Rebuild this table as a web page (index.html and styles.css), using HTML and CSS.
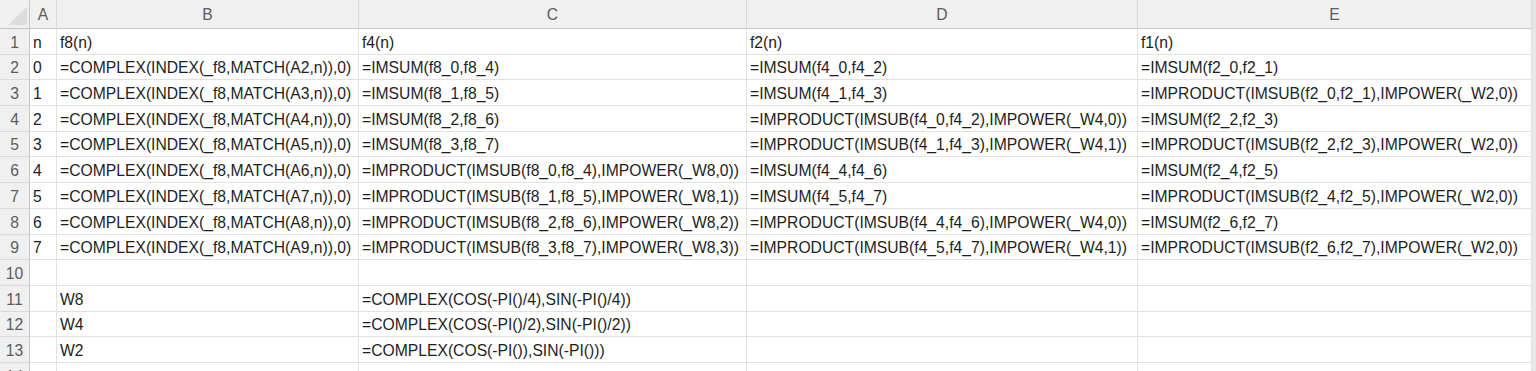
FILE: index.html
```html
<!DOCTYPE html>
<html lang="ja">
<head>
<meta charset="utf-8">
<title>Sheet</title>
<link rel="stylesheet" href="styles.css">
</head>
<body>
<div class="sheet">
  <div class="corner"><span class="tri"></span></div>
  <div class="colhdr">A</div>
  <div class="colhdr">B</div>
  <div class="colhdr">C</div>
  <div class="colhdr">D</div>
  <div class="colhdr">E</div>
  <div class="edge hdredge"></div>

  <div class="rowhdr">1</div>
  <div class="cell">n</div>
  <div class="cell">f8(n)</div>
  <div class="cell">f4(n)</div>
  <div class="cell">f2(n)</div>
  <div class="cell">f1(n)</div>
  <div class="edge"></div>

  <div class="rowhdr">2</div>
  <div class="cell">0</div>
  <div class="cell">=COMPLEX(INDEX(_f8,MATCH(A2,n)),0)</div>
  <div class="cell">=IMSUM(f8_0,f8_4)</div>
  <div class="cell">=IMSUM(f4_0,f4_2)</div>
  <div class="cell">=IMSUM(f2_0,f2_1)</div>
  <div class="edge"></div>

  <div class="rowhdr">3</div>
  <div class="cell">1</div>
  <div class="cell">=COMPLEX(INDEX(_f8,MATCH(A3,n)),0)</div>
  <div class="cell">=IMSUM(f8_1,f8_5)</div>
  <div class="cell">=IMSUM(f4_1,f4_3)</div>
  <div class="cell">=IMPRODUCT(IMSUB(f2_0,f2_1),IMPOWER(_W2,0))</div>
  <div class="edge"></div>

  <div class="rowhdr">4</div>
  <div class="cell">2</div>
  <div class="cell">=COMPLEX(INDEX(_f8,MATCH(A4,n)),0)</div>
  <div class="cell">=IMSUM(f8_2,f8_6)</div>
  <div class="cell">=IMPRODUCT(IMSUB(f4_0,f4_2),IMPOWER(_W4,0))</div>
  <div class="cell">=IMSUM(f2_2,f2_3)</div>
  <div class="edge"></div>

  <div class="rowhdr">5</div>
  <div class="cell">3</div>
  <div class="cell">=COMPLEX(INDEX(_f8,MATCH(A5,n)),0)</div>
  <div class="cell">=IMSUM(f8_3,f8_7)</div>
  <div class="cell">=IMPRODUCT(IMSUB(f4_1,f4_3),IMPOWER(_W4,1))</div>
  <div class="cell">=IMPRODUCT(IMSUB(f2_2,f2_3),IMPOWER(_W2,0))</div>
  <div class="edge"></div>

  <div class="rowhdr">6</div>
  <div class="cell">4</div>
  <div class="cell">=COMPLEX(INDEX(_f8,MATCH(A6,n)),0)</div>
  <div class="cell">=IMPRODUCT(IMSUB(f8_0,f8_4),IMPOWER(_W8,0))</div>
  <div class="cell">=IMSUM(f4_4,f4_6)</div>
  <div class="cell">=IMSUM(f2_4,f2_5)</div>
  <div class="edge"></div>

  <div class="rowhdr">7</div>
  <div class="cell">5</div>
  <div class="cell">=COMPLEX(INDEX(_f8,MATCH(A7,n)),0)</div>
  <div class="cell">=IMPRODUCT(IMSUB(f8_1,f8_5),IMPOWER(_W8,1))</div>
  <div class="cell">=IMSUM(f4_5,f4_7)</div>
  <div class="cell">=IMPRODUCT(IMSUB(f2_4,f2_5),IMPOWER(_W2,0))</div>
  <div class="edge"></div>

  <div class="rowhdr">8</div>
  <div class="cell">6</div>
  <div class="cell">=COMPLEX(INDEX(_f8,MATCH(A8,n)),0)</div>
  <div class="cell">=IMPRODUCT(IMSUB(f8_2,f8_6),IMPOWER(_W8,2))</div>
  <div class="cell">=IMPRODUCT(IMSUB(f4_4,f4_6),IMPOWER(_W4,0))</div>
  <div class="cell">=IMSUM(f2_6,f2_7)</div>
  <div class="edge"></div>

  <div class="rowhdr">9</div>
  <div class="cell">7</div>
  <div class="cell">=COMPLEX(INDEX(_f8,MATCH(A9,n)),0)</div>
  <div class="cell">=IMPRODUCT(IMSUB(f8_3,f8_7),IMPOWER(_W8,3))</div>
  <div class="cell">=IMPRODUCT(IMSUB(f4_5,f4_7),IMPOWER(_W4,1))</div>
  <div class="cell">=IMPRODUCT(IMSUB(f2_6,f2_7),IMPOWER(_W2,0))</div>
  <div class="edge"></div>

  <div class="rowhdr">10</div>
  <div class="cell"></div>
  <div class="cell"></div>
  <div class="cell"></div>
  <div class="cell"></div>
  <div class="cell"></div>
  <div class="edge"></div>

  <div class="rowhdr">11</div>
  <div class="cell"></div>
  <div class="cell">W8</div>
  <div class="cell">=COMPLEX(COS(-PI()/4),SIN(-PI()/4))</div>
  <div class="cell"></div>
  <div class="cell"></div>
  <div class="edge"></div>

  <div class="rowhdr">12</div>
  <div class="cell"></div>
  <div class="cell">W4</div>
  <div class="cell">=COMPLEX(COS(-PI()/2),SIN(-PI()/2))</div>
  <div class="cell"></div>
  <div class="cell"></div>
  <div class="edge"></div>

  <div class="rowhdr">13</div>
  <div class="cell"></div>
  <div class="cell">W2</div>
  <div class="cell">=COMPLEX(COS(-PI()),SIN(-PI()))</div>
  <div class="cell"></div>
  <div class="cell"></div>
  <div class="edge"></div>

  <div class="rowhdr">14</div>
  <div class="cell"></div>
  <div class="cell"></div>
  <div class="cell"></div>
  <div class="cell"></div>
  <div class="cell"></div>
  <div class="edge"></div>
</div>
</body>
</html>
```

FILE: styles.css
```css
html, body {
  margin: 0;
  padding: 0;
  background: #ffffff;
  overflow: hidden;
}

.sheet {
  display: grid;
  grid-template-columns: 30px 27px 302px 388px 391px 394px 4px;
  grid-template-rows: 29px repeat(14, 25.69px);
  font-family: "Liberation Sans", Arial, "Noto Sans CJK JP", sans-serif;
  font-size: 15.7px;
  color: #1e1e1e;
  width: 1536px;
}

.corner {
  background: #f0f0f0;
  border-right: 1px solid #c6c6c6;
  border-bottom: 1px solid #c6c6c6;
  display: flex;
  justify-content: flex-end;
  align-items: flex-end;
  padding: 0 2px 3px 0;
}

.tri {
  width: 19px;
  height: 18px;
  background: #dcdcdc;
  clip-path: polygon(100% 0, 100% 100%, 0 100%);
}

.colhdr {
  background: #f0f0f0;
  border-right: 1px solid #dadada;
  border-bottom: 1px solid #c6c6c6;
  color: #5c5c5c;
  display: flex;
  align-items: center;
  justify-content: center;
  line-height: 18px;
  padding-top: 1px;
}

.rowhdr {
  background: #f0f0f0;
  border-right: 1px solid #c6c6c6;
  border-bottom: 1px solid #dadada;
  color: #5c5c5c;
  display: flex;
  align-items: flex-end;
  justify-content: center;
  line-height: 18px;
  padding-bottom: 2px;
}

.cell {
  border-right: 1px solid #e1e1e1;
  border-bottom: 1px solid #e1e1e1;
  padding: 0 0 2px 3px;
  display: flex;
  align-items: flex-end;
  line-height: 18px;
  white-space: nowrap;
  overflow: hidden;
}

.edge {
  background: #e8e8e8;
}

.hdredge {
  background: #e4e4e4;
}
```
